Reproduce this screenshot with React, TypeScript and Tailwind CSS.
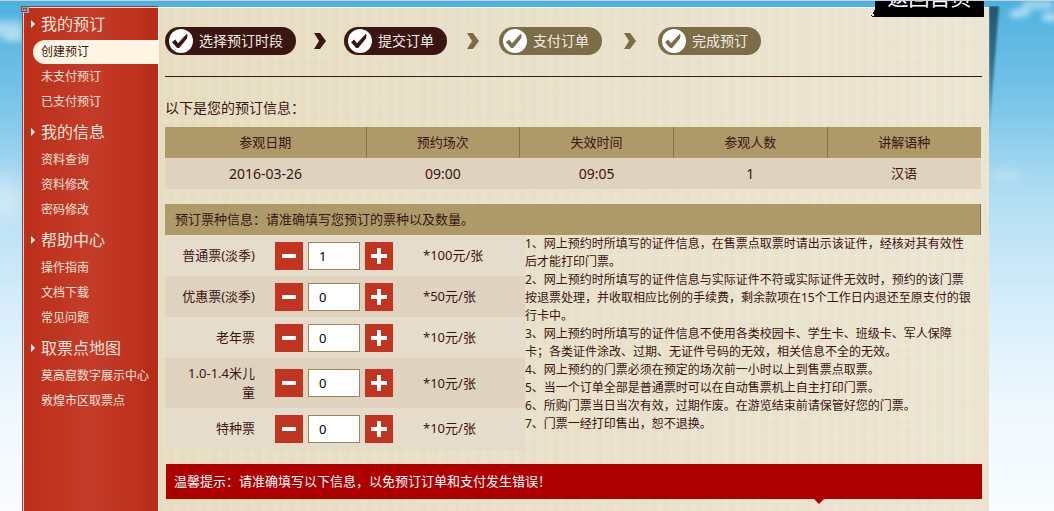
import React, { useState } from 'react';

const MENU: { title: string; items: string[] }[] = [
  { title: '我的预订', items: ['创建预订', '未支付预订', '已支付预订'] },
  { title: '我的信息', items: ['资料查询', '资料修改', '密码修改'] },
  { title: '帮助中心', items: ['操作指南', '文档下载', '常见问题'] },
  { title: '取票点地图', items: ['莫高窟数字展示中心', '敦煌市区取票点'] },
];

const STEPS: { label: string; done: boolean; arrow: string }[] = [
  { label: '选择预订时段', done: true, arrow: '' },
  { label: '提交订单', done: true, arrow: 'w-12 text-[#3a1512]' },
  { label: '支付订单', done: false, arrow: 'w-13 text-[#7c6c48]' },
  { label: '完成预订', done: false, arrow: 'w-14 text-[#7c6c48]' },
];

const BOOKING: { label: string; value: string }[] = [
  { label: '参观日期', value: '2016-03-26' },
  { label: '预约场次', value: '09:00' },
  { label: '失效时间', value: '09:05' },
  { label: '参观人数', value: '1' },
  { label: '讲解语种', value: '汉语' },
];

const TICKETS: { id: string; name: string; price: number }[] = [
  { id: 'normal', name: '普通票(淡季)', price: 100 },
  { id: 'discount', name: '优惠票(淡季)', price: 50 },
  { id: 'senior', name: '老年票', price: 10 },
  { id: 'child', name: '1.0-1.4米儿童', price: 10 },
  { id: 'special', name: '特种票', price: 10 },
];

const NOTICES = [
  '1、网上预约时所填写的证件信息，在售票点取票时请出示该证件，经核对其有效性后才能打印门票。',
  '2、网上预约时所填写的证件信息与实际证件不符或实际证件无效时，预约的该门票按退票处理，并收取相应比例的手续费，剩余款项在15个工作日内退还至原支付的银行卡中。',
  '3、网上预约时所填写的证件信息不使用各类校园卡、学生卡、班级卡、军人保障卡；各类证件涂改、过期、无证件号码的无效，相关信息不全的无效。',
  '4、网上预约的门票必须在预定的场次前一小时以上到售票点取票。',
  '5、当一个订单全部是普通票时可以在自动售票机上自主打印门票。',
  '6、所购门票当日当次有效，过期作废。在游览结束前请保管好您的门票。',
  '7、门票一经打印售出，恕不退换。',
];

const Clouds: React.FC = () => (
  <div className="pointer-events-none absolute inset-0 overflow-hidden">
    <div className="absolute -left-4 top-5 h-4 w-10 rounded-full bg-white/50 blur-[4px]" />
    <div className="absolute left-1 top-8 h-2 w-5 rounded-full bg-white/40 blur-[3px]" />
    <div className="absolute -left-6 top-44 h-10 w-12 rounded-full bg-white/40 blur-md" />
    <div className="absolute right-6 top-2 h-2 w-5 -rotate-12 rounded-full bg-white/60 blur-[3px]" />
    <div className="absolute -right-1 top-3 h-2 w-4 rounded-full bg-white/60 blur-[3px]" />
    <div className="absolute right-0 top-0 h-2 w-8 rounded-full bg-white/50 blur-[3px]" />
    <div className="absolute right-8 top-42 h-3 w-8 rounded-full bg-white/20 blur-[4px]" />
  </div>
);

const Sidebar: React.FC = () => {
  const [active, setActive] = useState('创建预订');

  return (
    <aside className="relative w-34 shrink-0 border-l border-t border-[#c0301c]">
      <div className="h-full border-l border-t border-[#d9e9ee] bg-[linear-gradient(to_right,#bc2f1a,#c43c29_50%,#bd311d_85%,#b42a16)]">
        {MENU.map((group) => (
          <div key={group.title} className="pb-px">
            <h2 className="flex h-8 items-center gap-[6px] pl-[7px] text-base leading-6 text-[#f3e3da]">
              <svg width="4" height="8" viewBox="0 0 4 8" fill="#fff" aria-hidden="true">
                <path d="M0 0L4 4L0 8Z" />
              </svg>
              {group.title}
            </h2>
            <ul>
              {group.items.map((item) => (
                <li key={item} className="h-[25px] pl-[9px] text-xs leading-6">
                  <a
                    href="#"
                    onClick={() => setActive(item)}
                    className={`block h-6 whitespace-nowrap pl-2 ${
                      active === item ? 'rounded-l-full bg-[#fff5e1] text-[#3a1512]' : 'text-[#f3e3da]'
                    }`}
                  >
                    {item}
                  </a>
                </li>
              ))}
            </ul>
          </div>
        ))}
      </div>
      {/* Corner ornament */}
      <svg
        className="absolute -left-[2px] -top-px"
        width="8"
        height="7"
        viewBox="0 0 8 7"
        fill="none"
        shapeRendering="crispEdges"
        aria-hidden="true"
      >
        <path d="M0 0H8V7H0Z" fill="#5db9e2" />
        <path d="M8 .5H.5V5.5H5.5V2.5H2.5V4" stroke="#c0301c" />
      </svg>
    </aside>
  );
};

const Step: React.FC<{ label: string; done: boolean }> = ({ label, done }) => (
  <div
    className={`flex h-7 items-center gap-[6px] rounded-full pl-1 pr-[13px] text-sm leading-7 ${
      done ? 'bg-[#3a1512] text-[#3a1512]' : 'bg-[#7c6c48] text-[#7c6c48]'
    }`}
  >
    <svg width="24" height="24" viewBox="0 0 24 24" aria-hidden="true">
      <circle cx="12" cy="12" r="12" fill="#fff" />
      <path d="M3 13.2L6.2 10.6L9 14.2L17.6 5L18.4 5.4V7.6L18 9.5L10.2 19H8.2Z" fill="currentColor" />
    </svg>
    <span className="text-[#f2ece0]">{label}</span>
  </div>
);

const Stepper: React.FC = () => (
  <ol className="flex h-7 items-center">
    {STEPS.map((step) => (
      <li key={step.label} className="flex items-center">
        {step.arrow && (
          <span className={`flex justify-center ${step.arrow}`}>
            <svg width="12" height="16" viewBox="0 0 12 16" fill="currentColor" aria-hidden="true">
              <path d="M0 0H6L12 8L6 16H0L5 8Z" />
            </svg>
          </span>
        )}
        <Step label={step.label} done={step.done} />
      </li>
    ))}
  </ol>
);

const BookingTable: React.FC = () => (
  <table className="w-full table-fixed text-center text-[13px] leading-[31px]">
    <thead>
      <tr className="bg-[#ae9a68]">
        {BOOKING.map((col, i) => (
          <th
            key={col.label}
            className={`border-r border-[#85734b] p-0 font-normal last:border-r-0 ${i === 0 ? 'w-[201px]' : ''}`}
          >
            {col.label}
          </th>
        ))}
      </tr>
    </thead>
    <tbody>
      <tr className="bg-[#dfd2bf]">
        {BOOKING.map((col) => (
          <td key={col.label} className="p-0 text-[14px] last:text-[13px]">{col.value}</td>
        ))}
      </tr>
    </tbody>
  </table>
);

const TicketTable: React.FC = () => {
  const [counts, setCounts] = useState<Record<string, number>>({ normal: 1 });

  const setCount = (id: string, value: number) => {
    setCounts((prev) => ({ ...prev, [id]: Math.max(0, value || 0) }));
  };

  return (
    <table className="w-[360px] shrink-0 text-[13px] leading-[19px]">
      <tbody>
        {TICKETS.map((ticket) => {
          const count = counts[ticket.id] || 0;
          return (
            <tr key={ticket.id} className="h-[41px] odd:bg-[#e6dccb] even:bg-[#dfd2bf]">
              <td className="w-[90px] py-[6px] pl-3 pr-0 text-right">
                <label htmlFor={ticket.id} className="block">{ticket.name}</label>
              </td>
              <td className="w-[138px] py-[6px] pl-5 pr-0">
                <div className="flex gap-[5px]">
                  <button
                    type="button"
                    aria-label={`减少${ticket.name}`}
                    className="flex size-7 items-center justify-center bg-[#c03420] text-white"
                    onClick={() => setCount(ticket.id, count - 1)}
                  >
                    <svg width="16" height="16" viewBox="0 0 16 16" fill="currentColor">
                      <path d="M1 6H15V10H1Z" />
                    </svg>
                  </button>
                  <input
                    id={ticket.id}
                    type="text"
                    value={count}
                    onChange={(e) => setCount(ticket.id, Number(e.target.value))}
                    className="h-7 w-13 border border-[#9a8858] bg-white pl-[10px] text-[13px] text-black"
                  />
                  <button
                    type="button"
                    aria-label={`增加${ticket.name}`}
                    className="flex size-7 items-center justify-center bg-[#c03420] text-white"
                    onClick={() => setCount(ticket.id, count + 1)}
                  >
                    <svg width="16" height="16" viewBox="0 0 16 16" fill="currentColor">
                      <path d="M0 6H6V0H10V6H16V10H10V16H6V10H0Z" />
                    </svg>
                  </button>
                </div>
              </td>
              <td className="py-0 pl-[30px] pr-0">*{ticket.price}元/张</td>
            </tr>
          );
        })}
      </tbody>
    </table>
  );
};

export default function App() {
  return (
    <div className="relative flex min-h-screen overflow-hidden border-t border-[#c9d0e6] bg-[linear-gradient(to_bottom,#4db1df,#7ac5e9_20%,#b6dff4_40%,#d9effc_62%,#f1f9fe_82%,#f8fcff)] pl-[22px] pr-[65px] pt-[5px] font-['Noto_Sans','Noto_Sans_CJK_SC',sans-serif] text-[#3a1512]">
      <Clouds />
      <Sidebar />
      <main className="relative min-w-0 flex-1">
        <div className="mt-px h-full border-l border-t border-[#f7f5ee] bg-[#e9e1ca] bg-[repeating-linear-gradient(to_right,#d9cca014_0_2px,transparent_2px_5px,#ffffff14_5px_7px,transparent_7px_11px),repeating-linear-gradient(to_bottom,#d9cca018_0_1px,transparent_1px_4px,#ffffff14_4px_5px,transparent_5px_9px),linear-gradient(to_right,#e7ddc1,#e8e0c8_35%,#ece5d2)] pl-[6px] pr-[7px] pt-[19px]">
          <Stepper />
          <div className="mt-[21px] h-px bg-[#3a1512]" />
          <p className="mt-5 text-sm leading-[22px]">以下是您的预订信息：</p>
          <div className="mr-px mt-2">
            <BookingTable />
            <h3 className="mt-[15px] border-r border-[#85734b] bg-[#ae9a68] pl-[10px] text-[13px] leading-[31px]">
              预订票种信息：请准确填写您预订的票种以及数量。
            </h3>
            <div className="flex items-start">
              <TicketTable />
              <div className="flex-1 pr-2 text-xs leading-[18px]">
                {NOTICES.map((notice) => (
                  <p key={notice}>{notice}</p>
                ))}
              </div>
            </div>
          </div>
          <div className="relative ml-px mt-[15px] bg-[#ae0000] pl-2 text-[13px] leading-[35px] text-white">
            温馨提示：请准确填写以下信息，以免预订订单和支付发生错误！
            <svg className="absolute right-[158px] top-full" width="10" height="5" viewBox="0 0 10 5" fill="#ae0000" aria-hidden="true">
              <path d="M0 0H10L5 5Z" />
            </svg>
          </div>
        </div>

        {/* Page shadow on the right edge */}
        <div className="absolute left-full top-0 h-32 w-3 overflow-hidden">
          <div className="h-full blur-[1px]">
            <div className="h-full w-[10px] bg-[linear-gradient(to_bottom,#1d3f50cc,#1d3f5099_50%,#1d3f5033)] [clip-path:polygon(0_0,100%_0,70%_30%,0_100%)]" />
          </div>
        </div>

        {/* Home link hanging from the header */}
        <a
          href="#"
          className="absolute -top-[5px] right-[5px] flex h-4 w-[109px] items-end justify-center overflow-hidden bg-black pb-1 text-[21px] leading-8 text-white"
        >
          返回首页
        </a>
        <svg className="absolute right-[114px] top-1" width="4" height="7" viewBox="0 0 4 7" aria-hidden="true">
          <path d="M3 0H4V7H1V6H3V4H2V2H3ZM0 5H1V6H0Z" fill="#1a1410" />
        </svg>
      </main>
    </div>
  );
}
